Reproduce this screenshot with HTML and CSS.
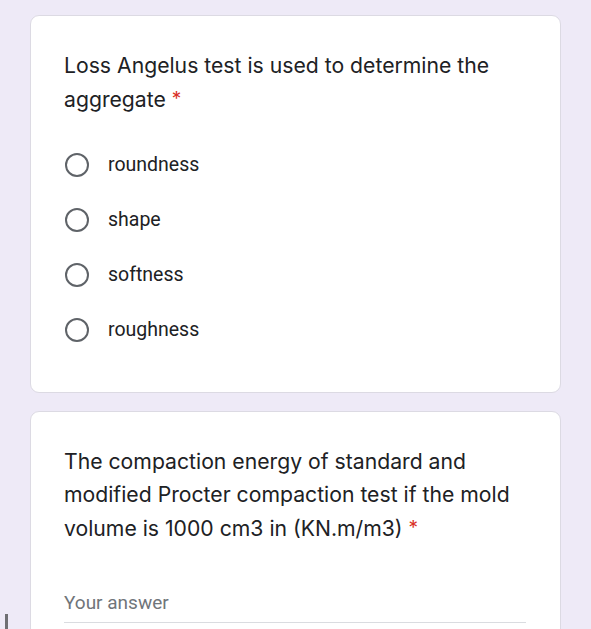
FILE: index.html
```html
<!DOCTYPE html>
<html>
<head>
  <meta charset="utf-8">
  <link rel="stylesheet" href="styles.css">
</head>
<body>
    <div class="form">
        <div class="question-card">
            <div class="question-title">Loss Angelus test is used to determine the aggregate<span class="required">*</span></div>
            <div class="options">
                <label class="option"><span class="radio"></span><span class="option-label">roundness</span></label>
                <label class="option"><span class="radio"></span><span class="option-label">shape</span></label>
                <label class="option"><span class="radio"></span><span class="option-label">softness</span></label>
                <label class="option"><span class="radio"></span><span class="option-label">roughness</span></label>
            </div>
        </div>
        <div class="question-card">
            <div class="question-title">The compaction energy of standard and modified Procter compaction test if the mold volume is 1000 cm3 in (KN.m/m3)<span class="required">*</span></div>
            <div class="answer">Your answer</div>
        </div>
    </div>
    <div class="scroll-mark"></div>
</body>
</html>
```

FILE: styles.css
```css
html, body {
    margin: 0;
    height: 100%;
}

body {
    background-color: #eeeaf7;
    font-family: Roboto, "Liberation Sans", sans-serif;
    color: #202124;
    overflow: hidden;
}

.form {
    padding: 15px 30px;
    display: flex;
    flex-direction: column;
    gap: 18px;
}

.question-card {
    background-color: #fff;
    border: 1px solid #dcdae3;
    border-radius: 9px;
    padding: 33px 33px 35px 33px;
}

.question-title {
    font-family: Inter, "Noto Sans", sans-serif;
    font-size: 21.2px;
    line-height: 33px;
    color: #202124;
}

.required {
    color: #d93025;
    margin-left: 6px;
    font-size: 19px;
    vertical-align: 2px;
}

.options {
    margin-top: 21px;
    display: flex;
    flex-direction: column;
}

.option {
    display: flex;
    align-items: center;
    height: 55px;
}

.radio {
    width: 20px;
    height: 20px;
    border: 2.5px solid #5f6368;
    border-radius: 50%;
    margin-left: 1px;
}

.option-label {
    font-size: 19.5px;
    margin-left: 19px;
}

.answer {
    margin-top: 47px;
    font-size: 19px;
    line-height: 22px;
    color: #70757a;
    padding-bottom: 8px;
    border-bottom: 1px solid #dadce0;
    width: 462px;
}

.scroll-mark {
    position: fixed;
    left: 5px;
    bottom: 0;
    width: 3px;
    height: 15px;
    background-color: #6f6f73;
}
```
